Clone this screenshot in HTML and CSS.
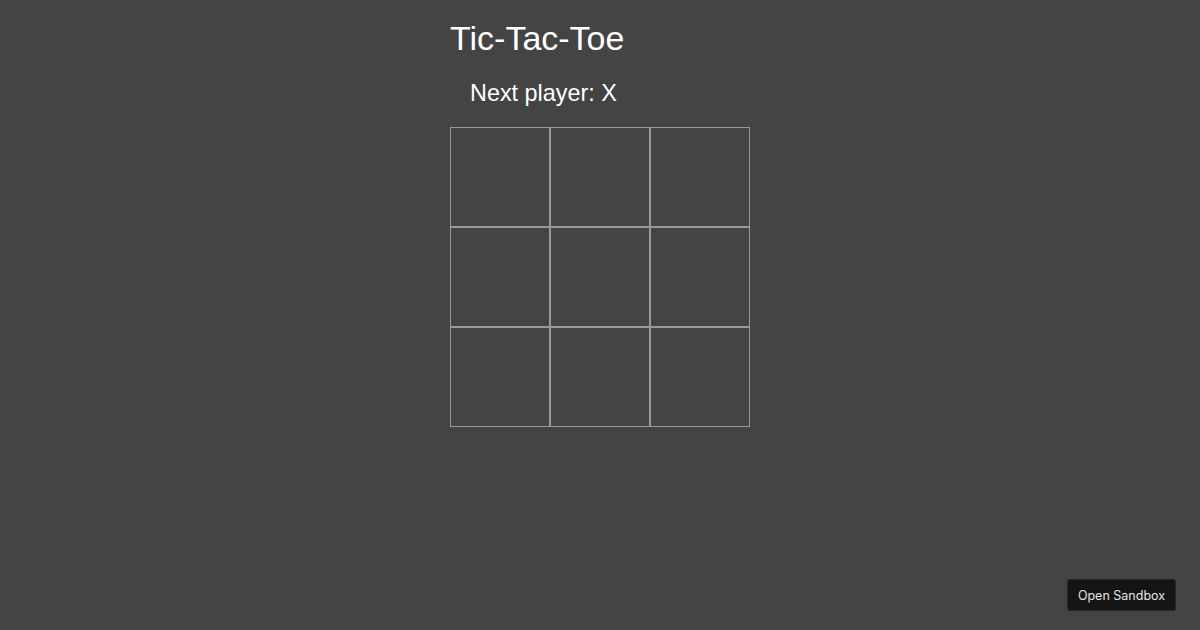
FILE: index.html
```html
<!DOCTYPE html>
<html lang="en">

<head>
    <meta charset="UTF-8">
    <meta name="viewport" content="width=device-width, initial-scale=1.0">
    <title>Tic-Tac-Toe</title>
    <link rel="stylesheet" href="styles.css">
</head>

<body>
    <div class="game">
        <h1>Tic-Tac-Toe</h1>
        <div class="status">Next player: X</div>
        <div class="board">
            <button class="square"></button>
            <button class="square"></button>
            <button class="square"></button>
            <button class="square"></button>
            <button class="square"></button>
            <button class="square"></button>
            <button class="square"></button>
            <button class="square"></button>
            <button class="square"></button>
        </div>
    </div>
    <a class="open-sandbox">Open Sandbox</a>
</body>

</html>
```

FILE: styles.css
```css
* {
    padding: 0;
    margin: 0;
    box-sizing: border-box;
}

body {
    background: #444444;
    color: #ffffff;
    font-family: "Liberation Sans", Arial, sans-serif;
    height: 630px;
}

.game {
    width: 300px;
    margin: 0 auto;
    padding-top: 18px;
}

.game h1 {
    font-size: 34px;
    font-weight: normal;
    line-height: 40px;
}

.status {
    font-size: 23.4px;
    line-height: 28px;
    padding: 21px 20px 20px;
}

.board {
    display: grid;
    grid-template-columns: repeat(3, 100px);
    grid-auto-rows: 100px;
}

.square {
    background: transparent;
    border: 1px solid #999999;
    color: #ffffff;
    font-size: 40px;
}

.open-sandbox {
    position: fixed;
    right: 24px;
    bottom: 19px;
    width: 109px;
    height: 32px;
    display: flex;
    align-items: center;
    justify-content: center;
    background: #151515;
    border: 1px solid #252525;
    border-radius: 3px;
    color: #e6e6e6;
    font-family: Inter, "Liberation Sans", sans-serif;
    font-size: 12.5px;
}
```
